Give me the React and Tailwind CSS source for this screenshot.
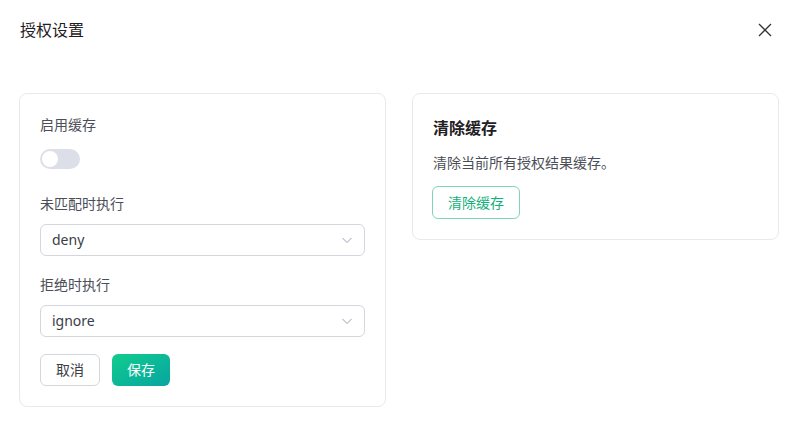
import React, { useState } from 'react';

const font = { fontFamily: '"Noto Sans", "Noto Sans CJK SC", sans-serif' };

const Chevron = () => (
  <svg width="12" height="12" viewBox="0 0 12 12" fill="none" className="text-gray-400">
    <path d="M1.5 4l4.5 4.5L10.5 4" stroke="currentColor" strokeWidth="1" />
  </svg>
);

const Select = ({ value }) => (
  <div className="flex items-center justify-between h-8 px-[11px] border border-[#d4d6de] rounded-md text-sm text-[#3a3d45]">
    <span>{value}</span>
    <Chevron />
  </div>
);

export default function App() {
  const [enabled, setEnabled] = useState(false);

  return (
    <div className="w-[798px] h-[422px] bg-white" style={font}>
      {/* Header */}
      <div className="flex items-center justify-between pl-5 pr-[25px] h-[60px]">
        <h1 className="text-base text-[#1f2024]">授权设置</h1>
        <button className="text-[#333]">
          <svg width="16" height="16" viewBox="0 0 16 16" fill="none">
            <path d="M2 2l12 12M14 2L2 14" stroke="currentColor" strokeWidth="1.3" />
          </svg>
        </button>
      </div>

      <div className="flex items-start gap-[26px] px-[19px] pt-[33px]">
        {/* Left card */}
        <div className="w-[367px] border border-[#e8e9ef] rounded-lg px-5 pt-[20px] pb-[20px]">
          <div className="text-sm text-[#4b4e57] leading-[22px]">启用缓存</div>
          <button
            onClick={() => setEnabled(!enabled)}
            className={`mt-[13px] w-10 h-5 rounded-full p-[2px] flex ${enabled ? 'bg-emerald-500 justify-end' : 'bg-[#dcdfe7] justify-start'}`}
          >
            <span className="w-4 h-4 rounded-full bg-white" />
          </button>
          <div className="mt-[24px] text-sm text-[#4b4e57] leading-[22px]">未匹配时执行</div>
          <div className="mt-[9px]">
            <Select value="deny" />
          </div>
          <div className="mt-[18px] text-sm text-[#4b4e57] leading-[22px]">拒绝时执行</div>
          <div className="mt-[9px]">
            <Select value="ignore" />
          </div>
          <div className="mt-[17px] flex gap-3">
            <button className="h-8 w-[60px] border border-[#d4d6de] rounded-md text-sm text-[#3a3d45]">取消</button>
            <button className="h-8 w-[58px] rounded-md text-sm text-white bg-gradient-to-br from-[#12cc8c] to-[#0aa5a0]">保存</button>
          </div>
        </div>

        {/* Right card */}
        <div className="w-[367px] border border-[#e8e9ef] rounded-lg px-5 pt-[22px] pb-[20px]">
          <div className="text-base font-bold text-[#1f2024] leading-6">清除缓存</div>
          <div className="mt-[12px] text-sm text-[#4b4e57] leading-[22px]">清除当前所有授权结果缓存。</div>
          <button className="mt-[12px] h-[33px] w-[88px] -ml-px border border-[#7fd6b6] rounded-md text-sm text-[#12b07a]">清除缓存</button>
        </div>
      </div>
    </div>
  );
}
